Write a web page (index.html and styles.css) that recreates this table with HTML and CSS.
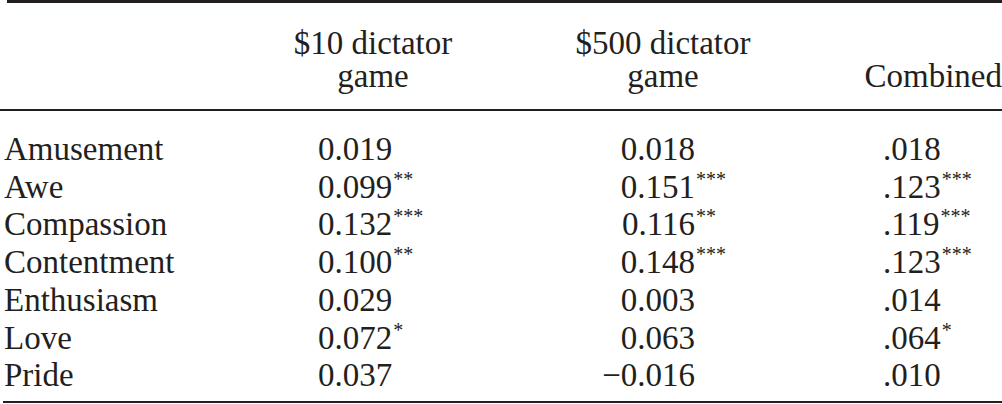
FILE: index.html
```html
<!DOCTYPE html>
<html lang="en">
<head>
<meta charset="utf-8">
<title>Table</title>
<link rel="stylesheet" href="styles.css">
</head>
<body>
<div class="wrap">
  <div class="rule rule-top"></div>
  <table class="t">
    <colgroup>
      <col class="c0"><col class="c1"><col class="c2"><col class="c3">
    </colgroup>
    <thead>
      <tr>
        <th class="h-label"></th>
        <th class="h-mid">$10 dictator<br>game</th>
        <th class="h-mid">$500 dictator<br>game</th>
        <th class="h-right">Combined</th>
      </tr>
    </thead>
    <tbody>
      <tr class="first"><td class="lab">Amusement</td><td class="n1"><span class="v">0.019</span></td><td class="n2"><span class="v">0.018</span></td><td class="n3"><span class="v">.018</span></td></tr>
      <tr><td class="lab">Awe</td><td class="n1"><span class="v">0.099</span><sup class="s">**</sup></td><td class="n2"><span class="v">0.151</span><sup class="s">***</sup></td><td class="n3"><span class="v">.123</span><sup class="s">***</sup></td></tr>
      <tr><td class="lab">Compassion</td><td class="n1"><span class="v">0.132</span><sup class="s">***</sup></td><td class="n2"><span class="v">0.116</span><sup class="s">**</sup></td><td class="n3"><span class="v">.119</span><sup class="s">***</sup></td></tr>
      <tr><td class="lab">Contentment</td><td class="n1"><span class="v">0.100</span><sup class="s">**</sup></td><td class="n2"><span class="v">0.148</span><sup class="s">***</sup></td><td class="n3"><span class="v">.123</span><sup class="s">***</sup></td></tr>
      <tr><td class="lab">Enthusiasm</td><td class="n1"><span class="v">0.029</span></td><td class="n2"><span class="v">0.003</span></td><td class="n3"><span class="v">.014</span></td></tr>
      <tr><td class="lab">Love</td><td class="n1"><span class="v">0.072</span><sup class="s">*</sup></td><td class="n2"><span class="v">0.063</span></td><td class="n3"><span class="v">.064</span><sup class="s">*</sup></td></tr>
      <tr class="last"><td class="lab">Pride</td><td class="n1"><span class="v">0.037</span></td><td class="n2"><span class="v">&minus;0.016</span></td><td class="n3"><span class="v">.010</span></td></tr>
    </tbody>
  </table>
  <div class="rule rule-bottom"></div>
</div>
</body>
</html>
```
FILE: styles.css
```css
html, body {
  margin: 0;
  padding: 0;
  background: #ffffff;
}
body {
  font-family: "Liberation Serif", "Times New Roman", serif;
  font-size: 33px;
  color: #231f20;
  width: 1002px;
  height: 404px;
  overflow: hidden;
}
.wrap {
  width: 1002px;
}
.rule {
  background: #231f20;
}
.rule-top {
  height: 3px;
  margin-left: 7px;
}
.rule-bottom {
  height: 2px;
  margin-left: 3px;
}
.t {
  width: 1002px;
  border-collapse: collapse;
  table-layout: fixed;
}
.c0 { width: 283px; }
.c1 { width: 180px; }
.c2 { width: 400px; }
.c3 { width: 139px; }
.t th {
  font-weight: normal;
  padding: 0;
  line-height: 33px;
  vertical-align: bottom;
  padding-top: 24px;
  padding-bottom: 16px;
  border-bottom: 2px solid #231f20;
}
.h-mid {
  text-align: center;
}
.h-right {
  text-align: right;
  white-space: nowrap;
}
.t td {
  padding: 0;
  line-height: 37.7px;
  height: 37.7px;
  white-space: nowrap;
}
.t tr.first td {
  padding-top: 20px;
}
.t tr.last td {
  padding-bottom: 6px;
}
.lab {
  padding-left: 4px !important;
}
.n1 {
  padding-left: 35px !important;
}
.n2 {
  padding-left: 112px !important;
}
.n2 .v {
  display: inline-block;
  width: 120px;
  text-align: right;
}
.n3 {
  padding-left: 20px !important;
}
.s {
  font-size: 20px;
  line-height: 0;
  vertical-align: 0;
  position: relative;
  top: -12px;
  margin-left: 1px;
}
```
